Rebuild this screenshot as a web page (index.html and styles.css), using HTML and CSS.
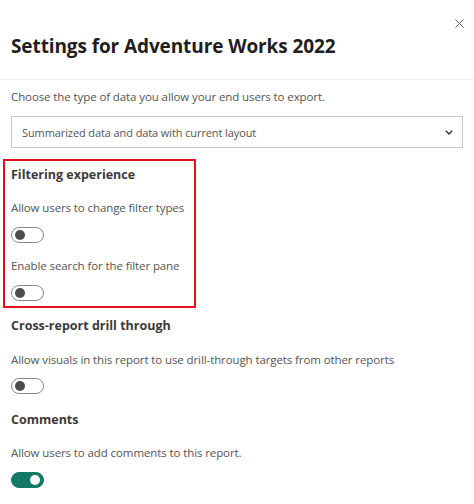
FILE: index.html
```html
<!DOCTYPE html>
<html lang="en">
<head>
<meta charset="utf-8">
<title>Settings</title>
<link rel="stylesheet" href="styles.css">
</head>
<body>
<div class="panel">
  <header class="header">
    <div class="close-row">
      <svg class="close" viewBox="0 0 10 10" width="9" height="9" aria-label="Close">
        <path d="M0.5 0.5 L9.5 9.5 M9.5 0.5 L0.5 9.5" stroke="#605e5c" stroke-width="1.1" fill="none"/>
      </svg>
    </div>
    <h1 class="title">Settings for Adventure Works 2022</h1>
  </header>
  <main class="content">
    <p class="text export-text">Choose the type of data you allow your end users to export.</p>
    <div class="select">
      <span class="select-value">Summarized data and data with current layout</span>
      <svg class="chevron" viewBox="0 0 8 5" width="8" height="5">
        <path d="M0.8 0.8 L4 4 L7.2 0.8" stroke="#323130" stroke-width="1.4" fill="none"/>
      </svg>
    </div>
    <section class="highlight">
      <h2 class="heading h-filter">Filtering experience</h2>
      <p class="text t-gap">Allow users to change filter types</p>
      <div class="toggle"><span class="knob"></span></div>
      <p class="text t-gap">Enable search for the filter pane</p>
      <div class="toggle"><span class="knob"></span></div>
    </section>
    <h2 class="heading h-cross">Cross-report drill through</h2>
    <p class="text t-gap2">Allow visuals in this report to use drill-through targets from other reports</p>
    <div class="toggle t-small"><span class="knob"></span></div>
    <h2 class="heading h-comments">Comments</h2>
    <p class="text t-gap">Allow users to add comments to this report.</p>
    <div class="toggle on"><span class="knob"></span></div>
  </main>
</div>
</body>
</html>
```
FILE: styles.css
```css
* { box-sizing: border-box; }
html, body { margin: 0; padding: 0; background: #ffffff; }
body {
  font-family: "Open Sans", "Noto Sans", "Liberation Sans", sans-serif;
  color: #252423;
  width: 474px;
  height: 504px;
  overflow: hidden;
}
.panel { width: 474px; }
.header {
  height: 80px;
  border-bottom: 1px solid #eeeeee;
  padding: 19px 10px 0 11px;
}
.close-row {
  display: flex;
  justify-content: flex-end;
  height: 9px;
}
.close { display: block; }
.title {
  margin: 4px 0 0 0;
  font-size: 19px;
  line-height: 28px;
  font-weight: 700;
  color: #1f1e1d;
  letter-spacing: -0.1px;
}
.content {
  padding: 7px 11px 0 11px;
}
.text {
  margin: 0;
  font-size: 11.5px;
  line-height: 20px;
  color: #555453;
  letter-spacing: -0.1px;
}
.heading {
  margin: 0;
  font-size: 12.5px;
  line-height: 20px;
  font-weight: 700;
  color: #3b3a39;
}
.select {
  margin-top: 9px;
  width: 452px;
  height: 32px;
  border: 1px solid #c8c8c8;
  display: flex;
  align-items: center;
  justify-content: space-between;
  padding: 0 9px 0 10px;
}
.select-value {
  font-size: 11px;
  color: #555453;
  letter-spacing: -0.1px;
}
.chevron { display: block; }
.highlight {
  margin: 11px 0 0 -8px;
  width: 193px;
  border: 2px solid #e3101d;
  padding: 4px 0 5px 6px;
}
.h-filter { margin: 0; }
.t-gap { margin-top: 13px; }
.t-gap2 { margin-top: 14px; }
.toggle {
  position: relative;
  margin-top: 9px;
  width: 33px;
  height: 16px;
  border: 1px solid #8a8886;
  border-radius: 8px;
}
.toggle.t-small { margin-top: 8px; }
.knob {
  position: absolute;
  left: 3px;
  top: 2px;
  width: 10px;
  height: 10px;
  border-radius: 50%;
  background: #4d4c4b;
}
.toggle.on {
  background: #127a64;
  border-color: #127a64;
}
.toggle.on .knob {
  left: auto;
  right: 3px;
  background: #ffffff;
}
.h-cross { margin-top: 8px; }
.h-comments { margin-top: 16px; }
```
